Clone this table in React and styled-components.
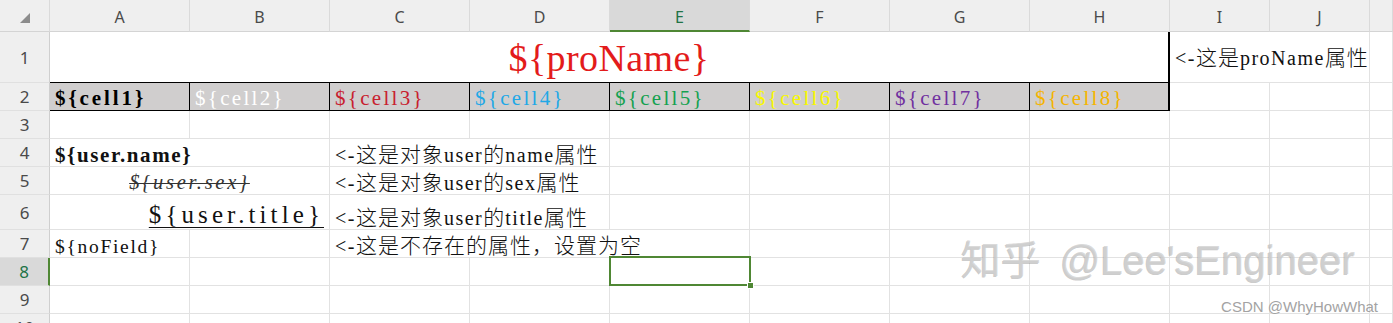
import React from 'react';
import styled, { createGlobalStyle, css } from 'styled-components';

const GlobalStyle = createGlobalStyle`
  html, body {
    margin: 0;
    padding: 0;
    background: #fff;
  }
  body {
    width: 1393px;
    height: 323px;
    overflow: hidden;
  }
`;

const GREEN = '#4f8734';

const Sheet = styled.div`
  position: relative;
  display: grid;
  grid-template-columns: 50px repeat(8, 140px) 100px 100px 1fr;
  grid-template-rows: 32px 51px repeat(4, 28px) 35px repeat(4, 28px);
  width: 1393px;
  height: 323px;
  overflow: hidden;
  color: #111;
`;

const Head = styled.div`
  display: flex;
  align-items: center;
  justify-content: center;
  box-sizing: border-box;
  background: ${p => (p.$active ? '#d9d9d9' : '#efefef')};
  color: ${p => (p.$active ? '#217346' : '#4a4a4a')};
  font-family: "Noto Sans", "Liberation Sans", sans-serif;
  font-size: 16px;
  border-right: 1px solid #dadada;
  border-bottom: 1px solid #d4d4d4;
`;

const ColHead = styled(Head)`
  padding-top: 3px;
  ${p => p.$active && css`
    border-bottom: 2px solid ${GREEN};
  `}
`;

const RowHead = styled(Head)`
  font-size: 17px;
  border-bottom-color: #e0e0e0;
  border-right: ${p => (p.$active ? `2px solid ${GREEN}` : '1px solid #cfcfcf')};
`;

const Corner = styled(Head)`
  position: relative;
  &::after {
    content: '';
    position: absolute;
    left: 20px;
    top: 13px;
    border-style: solid;
    border-width: 0 0 10px 10px;
    border-color: transparent transparent #8c8c8c transparent;
  }
`;

const Cell = styled.div`
  grid-column: span ${p => p.$span || 1};
  display: flex;
  align-items: ${p => (p.$middle ? 'center' : 'flex-end')};
  justify-content: ${p => ({ left: 'flex-start', center: 'center', right: 'flex-end' }[p.$align || 'left'])};
  padding: 0 5px ${p => (p.$pb != null ? p.$pb : 1)}px;
  box-sizing: border-box;
  min-width: 0;
  white-space: nowrap;
  border-right: 1px solid #e2e2e2;
  border-bottom: 1px solid #e2e2e2;
  ${p => p.$selected && css`
    position: relative;
    &::after {
      content: '';
      position: absolute;
      left: -1px;
      top: -2px;
      right: -2px;
      bottom: -1px;
      border: 2px solid ${GREEN};
    }
    &::before {
      content: '';
      position: absolute;
      right: -4px;
      bottom: -3px;
      width: 5px;
      height: 5px;
      background: ${GREEN};
      box-shadow: 0 0 0 1px #fff;
      z-index: 1;
    }
  `}
`;

const TitleCell = styled(Cell)`
  border-right: 2px solid #000;
  border-bottom: 1px solid #000;
`;

const BandCell = styled(Cell)`
  background: #d0cece;
  border-right: ${p => (p.$last ? 2 : 1)}px solid #000;
  border-bottom: 1px solid #000;
`;

const Tpl = styled.span`
  font-family: "Liberation Serif", "Times New Roman", serif;
  font-size: ${p => p.$size}px;
  letter-spacing: ${p => p.$ls || 0}px;
  font-weight: ${p => (p.$bold ? 700 : 400)};
  font-style: ${p => (p.$italic ? 'italic' : 'normal')};
  color: ${p => p.$color || '#111'};
  text-decoration: ${p => (p.$strike ? 'line-through' : p.$underline ? 'underline' : 'none')};
  text-decoration-thickness: 1px;
  text-underline-offset: 4px;
  line-height: 1;
`;

const NoteText = styled.span`
  font-family: "Liberation Serif", "Times New Roman", serif;
  font-size: 20px;
  letter-spacing: 1.5px;
  line-height: 22px;
  color: #111;
`;

const Han = styled.span`
  font-family: "Noto Sans CJK SC", sans-serif;
  font-size: 21px;
  font-weight: 300;
  letter-spacing: 1px;
`;

const Note = ({ children }) => (
  <NoteText>
    {children.split(/([\u2e80-\u9fff\uff00-\uffef]+)/).map((part, i) =>
      i % 2 ? <Han key={i}>{part}</Han> : part
    )}
  </NoteText>
);

const Watermark = styled.div`
  position: absolute;
  right: 38px;
  top: 240px;
  display: flex;
  gap: 19px;
  font-family: "Liberation Sans", "Noto Sans CJK SC", sans-serif;
  font-size: 40px;
  line-height: 40px;
  color: rgba(208, 208, 208, 0.8);
  text-shadow: -1px 1px 0 rgba(140, 140, 140, 0.45);
  pointer-events: none;
`;

const Credit = styled.div`
  position: absolute;
  right: 15px;
  top: 299px;
  font-family: "Liberation Sans", sans-serif;
  font-size: 15px;
  line-height: 15px;
  color: #a3a3a3;
`;

const COLS = ['A', 'B', 'C', 'D', 'E', 'F', 'G', 'H', 'I', 'J', ''];

const band = [
  { name: 'cell1', color: '#000', bold: true },
  { name: 'cell2', color: '#ffffff' },
  { name: 'cell3', color: '#c8202f' },
  { name: 'cell4', color: '#1fa8e6' },
  { name: 'cell5', color: '#14a150' },
  { name: 'cell6', color: '#f8f800' },
  { name: 'cell7', color: '#7030a0' },
  { name: 'cell8', color: '#f5b400' },
];

const blanks = (n, key) =>
  Array.from({ length: n }, (_, i) => <Cell key={`${key}-${i}`} />);

export default function App() {
  return (
    <>
      <GlobalStyle />
      <Sheet>
        <Corner />
        {COLS.map((c, i) => (
          <ColHead key={i} $active={c === 'E'}>{c}</ColHead>
        ))}

        <RowHead>1</RowHead>
        <TitleCell $span={8} $align="center" $pb={5}>
          <Tpl $size={38} $ls={0.4} $color="#e31b1b">{'${proName}'}</Tpl>
        </TitleCell>
        <Cell $span={2} $middle $pb={0}>
          <Note>{'<-这是proName属性'}</Note>
        </Cell>
        <Cell />

        <RowHead>2</RowHead>
        {band.map((b, i) => (
          <BandCell key={b.name} $last={i === band.length - 1}>
            <Tpl $size={21} $ls={b.bold ? 2.9 : 2.3} $bold={b.bold} $color={b.color}>
              {'${' + b.name + '}'}
            </Tpl>
          </BandCell>
        ))}
        {blanks(3, 'r2')}

        <RowHead>3</RowHead>
        {blanks(11, 'r3')}

        <RowHead>4</RowHead>
        <Cell $span={2} $pb={0}>
          <Tpl $size={21} $ls={1.6} $bold>{'${user.name}'}</Tpl>
        </Cell>
        <Cell $span={2} $pb={0}>
          <Note>{'<-这是对象user的name属性'}</Note>
        </Cell>
        {blanks(7, 'r4')}

        <RowHead>5</RowHead>
        <Cell $span={2} $align="center" $pb={2}>
          <Tpl $size={20.5} $ls={2.7} $italic $strike $color="#333">{'${user.sex}'}</Tpl>
        </Cell>
        <Cell $span={2} $pb={0}>
          <Note>{'<-这是对象user的sex属性'}</Note>
        </Cell>
        {blanks(7, 'r5')}

        <RowHead>6</RowHead>
        <Cell $span={2} $align="right" $pb={2}>
          <Tpl $size={25} $ls={4.1} $underline>{'${user.title}'}</Tpl>
        </Cell>
        <Cell $span={2} $pb={0}>
          <Note>{'<-这是对象user的title属性'}</Note>
        </Cell>
        {blanks(7, 'r6')}

        <RowHead>7</RowHead>
        <Cell>
          <Tpl $size={19.5} $ls={1.7}>{'${noField}'}</Tpl>
        </Cell>
        <Cell />
        <Cell $span={3} $pb={0}>
          <Note>{'<-这是不存在的属性，设置为空'}</Note>
        </Cell>
        {blanks(6, 'r7')}

        <RowHead $active>8</RowHead>
        {blanks(4, 'r8a')}
        <Cell $selected />
        {blanks(6, 'r8b')}

        <RowHead>9</RowHead>
        {blanks(11, 'r9')}

        <RowHead>10</RowHead>
        {blanks(11, 'r10')}

        <Watermark>
          <span>知乎</span>
          <span>@Lee'sEngineer</span>
        </Watermark>
        <Credit>CSDN @WhyHowWhat</Credit>
      </Sheet>
    </>
  );
}
